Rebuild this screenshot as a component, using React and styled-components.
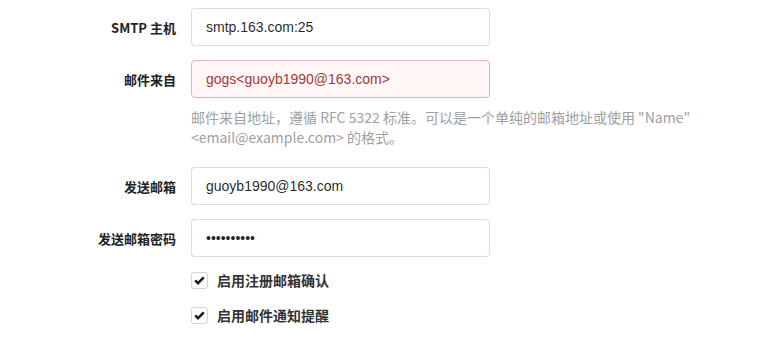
import React from "react";
import styled, { createGlobalStyle } from "styled-components";

const GlobalStyle = createGlobalStyle`
  html, body {
    margin: 0;
    padding: 0;
    background: #ffffff;
  }
  body {
    font-family: "Liberation Sans", "Noto Sans CJK SC", Arial, sans-serif;
    color: rgba(0, 0, 0, 0.87);
  }
`;

const Form = styled.form`
  padding-top: 8px;
  display: flex;
  flex-direction: column;
`;

const Field = styled.div`
  display: flex;
  align-items: center;
  margin-bottom: ${(p) => p.$gap ?? 14}px;
`;

const Label = styled.label`
  width: 176px;
  padding-right: 15px;
  box-sizing: content-box;
  text-align: right;
  font-family: "Noto Sans CJK SC", "Liberation Sans", sans-serif;
  font-weight: 700;
  font-size: 13px;
  color: #222222;
`;

const Input = styled.input`
  width: 299px;
  height: 38px;
  box-sizing: border-box;
  padding: 0 14px;
  border-radius: 4px;
  border: 1px solid ${(p) => (p.$error ? "#e0b4b4" : "rgba(34, 36, 38, 0.15)")};
  background: ${(p) => (p.$error ? "#fff6f6" : "#ffffff")};
  color: ${(p) => (p.$error ? "#9f3a38" : "rgba(0, 0, 0, 0.87)")};
  font-family: "Liberation Sans", Arial, sans-serif;
  font-size: 14px;
  outline: none;
`;

const Help = styled.p`
  margin: 9px 0 20px 191px;
  width: 540px;
  font-family: "Noto Sans CJK SC", sans-serif;
  font-size: 14px;
  line-height: 20px;
  color: #a0a0a0;
`;

const CheckRow = styled.label`
  display: flex;
  align-items: center;
  margin-left: 191px;
  margin-bottom: ${(p) => p.$gap ?? 0}px;
  font-family: "Noto Sans CJK SC", sans-serif;
  font-weight: 700;
  font-size: 14px;
  line-height: 19px;
  color: #333333;
`;

const Box = styled.span`
  width: 17px;
  height: 17px;
  box-sizing: border-box;
  border: 1px solid #d4d4d5;
  border-radius: 3px;
  display: flex;
  align-items: center;
  justify-content: center;
  margin-right: 9px;
`;

const Check = () => (
  <Box>
    <svg width="11" height="9" viewBox="0 0 11 9">
      <path d="M1.2 4.4 L4 7.2 L9.8 1.4" fill="none" stroke="#1b1b1b" strokeWidth="2.5" />
    </svg>
  </Box>
);

export default function App() {
  return (
    <>
      <GlobalStyle />
      <Form onSubmit={(e) => e.preventDefault()}>
        <Field>
          <Label>SMTP 主机</Label>
          <Input defaultValue="smtp.163.com:25" />
        </Field>
        <Field $gap={0}>
          <Label>邮件来自</Label>
          <Input $error defaultValue="gogs<guoyb1990@163.com>" />
        </Field>
        <Help>
          邮件来自地址，遵循 RFC 5322 标准。可以是一个单纯的邮箱地址或使用 "Name"
          <br />
          &lt;email@example.com&gt; 的格式。
        </Help>
        <Field>
          <Label>发送邮箱</Label>
          <Input defaultValue="guoyb1990@163.com" />
        </Field>
        <Field $gap={14}>
          <Label>发送邮箱密码</Label>
          <Input type="password" defaultValue="guoyb19900" />
        </Field>
        <CheckRow $gap={16}>
          <Check />
          启用注册邮箱确认
        </CheckRow>
        <CheckRow>
          <Check />
          启用邮件通知提醒
        </CheckRow>
      </Form>
    </>
  );
}
